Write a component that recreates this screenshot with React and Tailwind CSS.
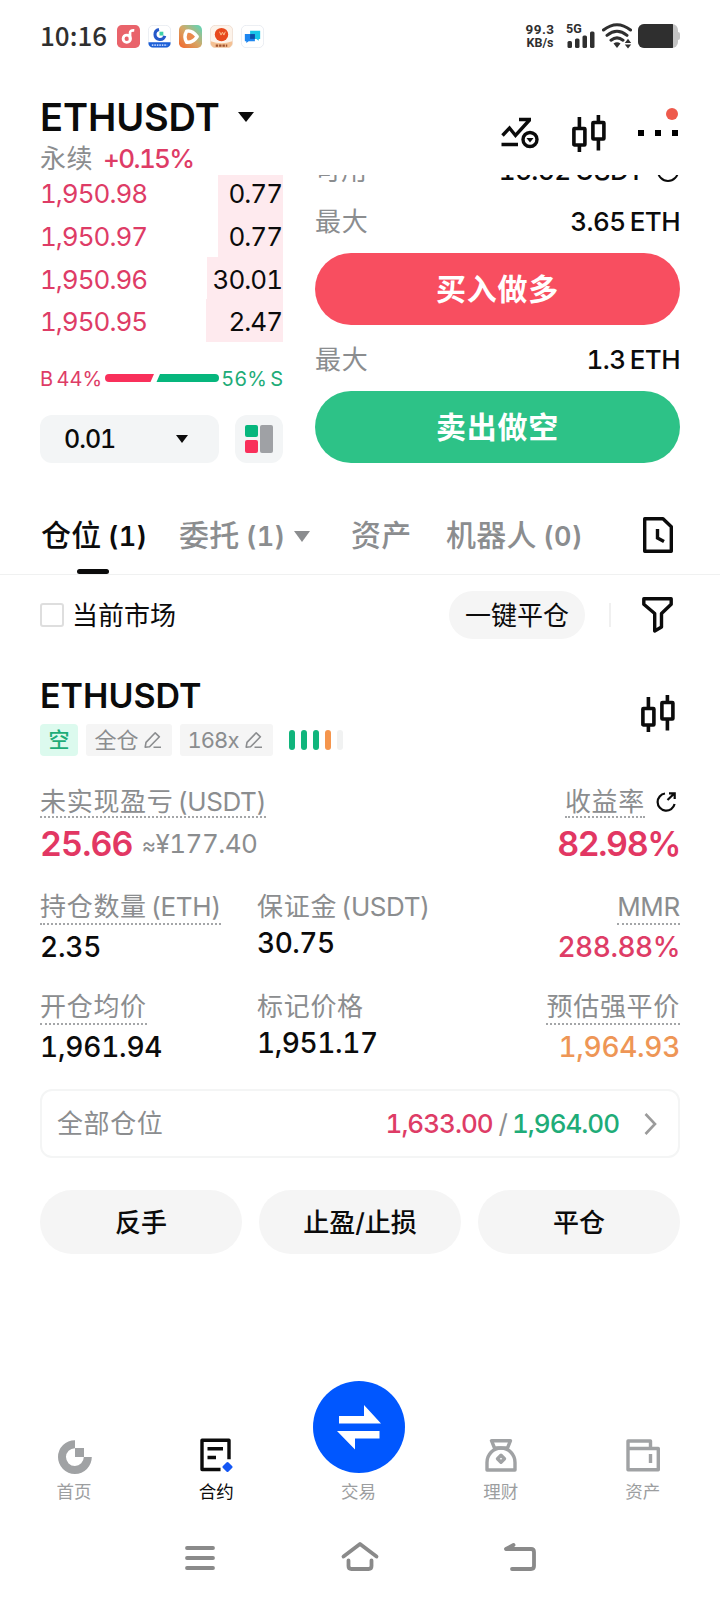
const asks = [
  { price: '1,950.98', size: '0.77', depth: 65 },
  { price: '1,950.97', size: '0.77', depth: 65 },
  { price: '1,950.96', size: '30.01', depth: 76 },
  { price: '1,950.95', size: '2.47', depth: 77 },
];

const riskBars = ['bg-[#11b57c]', 'bg-[#11b57c]', 'bg-[#11b57c]', 'bg-[#f5954d]', 'bg-[#f1f2f2]'];

const CaretDown = ({ className }) => (
  <svg viewBox="0 0 16 10" preserveAspectRatio="none" className={className} fill="currentColor">
    <path d="M0 0h16L8 10z" />
  </svg>
);

const Candles = ({ className }) => (
  <svg viewBox="0 0 34 38" className={className} fill="none" stroke="#0b0b0b" strokeWidth="3.6">
    <rect x="1.9" y="13.5" width="11" height="16.5" rx="0.6" />
    <rect x="20.9" y="7.5" width="11" height="16.5" rx="0.6" />
    <path d="M7.4 2v11.5M7.4 30v7M26.4 0v7.5M26.4 24v11.5" />
  </svg>
);

const Pencil = () => (
  <svg viewBox="0 0 18 18" className="h-[18px] w-[18px]" fill="none" stroke="#8b8d8f" strokeWidth="1.6">
    <path d="M1.2 16.2 2 11.4 11.2 1.8 15.4 5.8 5.6 15.8z M9.5 16.2H17" strokeLinejoin="round" />
  </svg>
);

const StatusBar = () => (
  <div className="flex h-[72px] items-center px-10 text-[#2f2f2f]">
    <span className="w-[77px] pb-[2px] font-['Noto_Sans_CJK_SC',sans-serif] text-[26px] font-medium leading-none">10:16</span>
    <div className="flex gap-[8px]">
      <svg viewBox="0 0 24 24" className="h-[23px] w-[23px]">
        <rect width="24" height="24" rx="5" fill="#e9636b" />
        <circle cx="10.2" cy="14.3" r="3.8" fill="none" stroke="#fff" strokeWidth="3" />
        <path d="M13.6 15V8.2q0-3 4.4-2.6" fill="none" stroke="#fff" strokeWidth="2.8" />
      </svg>
      <svg viewBox="0 0 24 24" className="h-[23px] w-[23px]">
        <rect x="0.4" y="0.4" width="23.2" height="23.2" rx="5" fill="#fff" stroke="#e4e8ee" strokeWidth="0.8" />
        <path d="M0.5 18h23v1a4.6 4.6 0 0 1-4.6 4.6H5.1A4.6 4.6 0 0 1 .5 19z" fill="#1c5fd6" />
        <path d="M11.5 4.8a5.2 5.2 0 1 0 6 6.5" fill="none" stroke="#2558c9" strokeWidth="3.2" />
        <rect x="12" y="7" width="4" height="4" fill="#3fd0a8" />
        <path d="M4 21h16" stroke="#b9d0ff" strokeWidth="2" strokeDasharray="1.6 1" />
      </svg>
      <svg viewBox="0 0 24 24" className="h-[23px] w-[23px]">
        <defs>
          <linearGradient id="play" x1="0" y1="1" x2="1" y2="0">
            <stop offset="0.1" stopColor="#ee7136" />
            <stop offset="0.5" stopColor="#d6a766" />
            <stop offset="0.9" stopColor="#6dd0ae" />
          </linearGradient>
        </defs>
        <rect width="24" height="24" rx="5" fill="url(#play)" />
        <path d="M8 6.5q5.5-1.5 11 5.5-4 6.500-11 6-3.500-5.500 0-11.500z" fill="#ea8a4e" stroke="#fff" strokeWidth="3.6" strokeLinejoin="round" />
      </svg>
      <svg viewBox="0 0 24 24" className="h-[23px] w-[23px]">
        <rect x="0.4" y="0.4" width="23.2" height="23.2" rx="5" fill="#fdf3ea" stroke="#ecd9cb" strokeWidth="0.8" />
        <path d="M.8 17q11 4 22.4 0v2a4.4 4.4 0 0 1-4.4 4.4H5.2A4.4 4.4 0 0 1 .8 19z" fill="#f4c194" />
        <circle cx="12" cy="10" r="7" fill="#e8491d" />
        <path d="M10 7l1.5 3.5L13 7.5l1.5 3L16 7" fill="none" stroke="#fbc08e" strokeWidth="1" />
        <path d="M6 21.5h12" stroke="#a0522d" strokeWidth="2.4" strokeDasharray="2.5 1" />
      </svg>
      <svg viewBox="0 0 24 24" className="h-[23px] w-[23px]">
        <rect x="0.4" y="0.4" width="23.2" height="23.2" rx="5" fill="#fff" stroke="#e4e8ee" strokeWidth="0.8" />
        <path d="M9.5 6H20v8.5h-1.5v2L16 14.500H9.500z" fill="#19c5e8" />
        <path d="M4 9.5h10.5V17H8l-2.500 1.800V17H4z" fill="#1e86f0" />
        <path d="M9.5 9.5h5v5h-5z" fill="#0c4fa8" />
      </svg>
    </div>
    <div className="ml-auto flex items-center">
      <div className="mr-[10px] flex w-[32px] flex-col items-center font-['Roboto',sans-serif] text-[13.5px] font-bold leading-[14px]">
        <span className="tracking-[0.5px]">99.3</span>
        <span className="text-[12.5px]">KB/s</span>
      </div>
      <div className="relative h-[26px] w-[30px]">
        <span className="absolute -top-[1px] left-0 font-['Roboto',sans-serif] text-[12.5px] font-bold leading-[14px]">5G</span>
        <svg viewBox="0 0 30 26" className="h-[26px] w-[30px]" fill="#2f2f2f">
          <rect x="1.5" y="18" width="4.5" height="7" rx="1.5" />
          <rect x="9" y="15.5" width="4.5" height="9.5" rx="1.5" />
          <rect x="16.5" y="12.5" width="4.5" height="12.5" rx="1.5" />
          <rect x="24" y="8.5" width="4.5" height="16.5" rx="1.5" />
        </svg>
      </div>
      <svg viewBox="0 0 30 26" className="ml-[6px] h-[26px] w-[30px]" fill="none" stroke="#2f2f2f" strokeWidth="3">
        <path d="M1.5 7Q15-3.5 28.5 7M5 12.3q10-8 20 0M9 17.2q6-4.6 12 0" strokeLinecap="round" />
        <path d="M11.5 20.5q3.5-2.4 7 0L15 25z" fill="#2f2f2f" stroke="none" />
        <path d="M22.8 20 26 15.8 29.2 20zM22.8 21.5h6.4L26 25.5z" fill="#2f2f2f" stroke="none" />
      </svg>
      <div className="ml-[6px] flex h-6 w-[40px] overflow-hidden rounded-[6px] bg-[#c4c4c4]">
        <div className="w-[35px] bg-[#2f2f2f]" />
      </div>
      <div className="h-2 w-[2px] rounded-r-sm bg-[#c4c4c4]" />
    </div>
  </div>
);

const Header = () => (
  <div className="flex h-[103px] justify-between px-10">
    <div className="pt-[25px]">
      <div className="flex h-10 items-center">
        <h1 className="w-[198px] whitespace-nowrap text-[38px] font-semibold leading-none tracking-[-0.1px]">ETHUSDT</h1>
        <CaretDown className="h-[10px] w-[16px]" />
      </div>
      <div className="mt-[6px] flex h-[31px] items-center text-[26px]">
        <span className="w-[63px] tracking-[0.5px] text-[#8b8d8f]">永续</span>
        <span className="font-medium tracking-[-1.6px] text-[#de3c66]">+0.15%</span>
      </div>
    </div>
    <div className="flex items-start pt-[43px]">
      <svg viewBox="0 0 38 32" className="mt-[2px] h-8 w-[38px]" fill="none" stroke="#0b0b0b" strokeWidth="3.4">
        <path d="M1.5 18.5 8.5 11l6 7.5L28.500 3M18 2.500h12M.5 27.500H17" />
        <circle cx="29" cy="22.5" r="7" />
        <path d="M25.5 21h7L29 25.500z" fill="#0b0b0b" stroke="none" />
      </svg>
      <Candles className="ml-[33px] h-[38px] w-[34px]" />
      <div className="relative ml-[31px] mr-px mt-[15px] flex w-[42px] justify-between px-[1px]">
        <span className="h-[6px] w-[6px] bg-black" />
        <span className="h-[6px] w-[6px] bg-black" />
        <span className="h-[6px] w-[6px] bg-black" />
        <span className="absolute -top-[22px] right-[1px] h-3 w-3 rounded-full bg-[#ee5a4c]" />
      </div>
    </div>
  </div>
);

const OrderBook = () => (
  <div className="w-[243px]">
    <div className="-mt-[3.4px]">
      {asks.map((row) => (
        <div key={row.price} className="relative flex h-[42.6px] items-center justify-between pt-[2px] text-[26px] tracking-[-1px]">
          <div className="absolute inset-y-0 right-0 bg-[#feeaee]" style={{ width: row.depth }} />
          <span className="text-[#de3c66]">{row.price}</span>
          <span className="relative pr-px">{row.size}</span>
        </div>
      ))}
    </div>
    <div className="flex h-[73px] items-center justify-between text-[20px]">
      <span className="pt-[2px] text-[#de3c66]">B 44%</span>
      <svg viewBox="0 0 114 8" className="h-2 w-[114px]">
        <path d="M4 0h45l-3.500 8H4a4 4 0 0 1 0-8z" fill="#f9305b" />
        <path d="M55 0h55a4 4 0 0 1 0 8H51.500z" fill="#06b67d" />
      </svg>
      <span className="pt-[2px] text-[#1eac78]">56% S</span>
    </div>
    <div className="flex justify-between">
      <div className="flex h-12 w-[179px] items-center justify-between rounded-xl bg-[#f3f5f6] pl-6 pr-[31px] text-[25px] font-medium tracking-[-1px]">
        <span className="pt-[2px]">0.01</span>
        <CaretDown className="h-2 w-[12px]" />
      </div>
      <div className="flex h-12 w-12 items-center justify-center gap-[2px] rounded-xl bg-[#f3f5f6]">
        <div className="flex flex-col gap-[3px]">
          <span className="h-[12.5px] w-[13px] rounded-[2px] bg-[#06b67d]" />
          <span className="h-[12.5px] w-[13px] rounded-[2px] bg-[#f9305b]" />
        </div>
        <span className="h-7 w-[13px] rounded-[2px] bg-[#9fa1a5]" />
      </div>
    </div>
  </div>
);

const OrderForm = () => (
  <div className="w-[365px] text-[26px]">
    <div className="-mt-[20px] flex h-[31px] items-center justify-between">
      <span className="text-[#8b8d8f]">可用</span>
      <span className="flex items-center gap-3 font-medium tracking-[-0.5px]">
        16.62 USDT
        <svg viewBox="0 0 24 24" className="h-6 w-6" fill="none" stroke="#0b0b0b" strokeWidth="2">
          <circle cx="12" cy="12" r="10" />
          <path d="M8 10h8M12 6v8" />
        </svg>
      </span>
    </div>
    <div className="flex h-[67px] items-center justify-between pt-[3px]">
      <span className="tracking-[0.8px] text-[#8b8d8f]">最大</span>
      <span className="font-medium tracking-[-0.6px]">3.65 ETH</span>
    </div>
    <button className="block h-[72px] w-full rounded-full bg-[#f84e60] text-[30px] font-bold tracking-[0.8px] text-white">买入做多</button>
    <div className="flex h-[66px] items-center justify-between pt-[2px]">
      <span className="tracking-[0.8px] text-[#8b8d8f]">最大</span>
      <span className="font-medium tracking-[-0.6px]">1.3 ETH</span>
    </div>
    <button className="block h-[72px] w-full rounded-full bg-[#2dc287] text-[30px] font-bold tracking-[0.8px] text-white">卖出做空</button>
  </div>
);

const Tabs = () => (
  <div className="mt-[36px] flex h-[76px] items-start border-b border-[#f0f1f1] pl-[41px] pr-[47px] text-[30px] font-medium leading-[72px] tracking-[0.3px] text-[#8b8d8f]">
    <div className="relative w-[138px] whitespace-nowrap text-[#0b0b0b]">
      仓位 <span className="text-[27px] font-semibold">(1)</span>
      <div className="absolute left-[36px] top-[70px] h-[5px] w-8 rounded-[3px] bg-[#0b0b0b]" />
    </div>
    <div className="flex w-[172px] items-center whitespace-nowrap">
      <span className="w-[115px]">委托 <span className="text-[27px] font-semibold">(1)</span></span>
      <CaretDown className="h-[11px] w-[16px]" />
    </div>
    <div className="w-[95px]">资产</div>
    <div className="whitespace-nowrap">机器人 <span className="text-[27px] font-semibold">(0)</span></div>
    <svg viewBox="0 0 30 36" className="ml-auto mt-[18px] h-9 w-[30px]" fill="none" stroke="#0b0b0b" strokeWidth="3.4">
      <path d="M1.7 1.7h18.300l8.300 8v24.500h-26.600z" strokeLinejoin="round" />
      <path d="M14.5 12v9l6.500 3.500" />
    </svg>
  </div>
);

const FilterRow = () => (
  <div className="flex h-20 items-center pl-10 pr-[47px] text-[26px]">
    <span className="mr-[8px] h-6 w-6 rounded-[3px] border-2 border-[#dedede]" />
    <span>当前市场</span>
    <button className="ml-auto h-12 w-[136px] rounded-full bg-[#f5f5f5]">一键平仓</button>
    <span className="ml-6 h-6 w-[2px] bg-[#f0f0f0]" />
    <svg viewBox="0 0 31 36" className="ml-[31px] h-9 w-[31px]" fill="none" stroke="#0b0b0b" strokeWidth="3.4" strokeLinejoin="round">
      <path d="M1.8 1.8h27.4v5.4L19.5 16.5v13.5l-6.8 4V16.500L1.800 7.200z" />
    </svg>
  </div>
);

const Label = ({ text, unit }) => (
  <>
    <span className={unit || text !== 'MMR' ? 'tracking-[0.7px]' : 'tracking-[-0.3px]'}>{text}</span>
    {unit && <span className="ml-[4px] tracking-[-0.4px]">({unit})</span>}
  </>
);

const Metric = ({ label, unit, value, dotted, right, valueClass = '' }) => (
  <div className={`flex flex-col ${right ? 'items-end' : 'items-start'}`}>
    <div className={`flex h-[35px] items-center whitespace-nowrap text-[26px] text-[#8b8d8f] ${dotted ? 'border-b-2 border-dotted border-[#a4a6a8]' : 'pb-[2px]'}`}>
      <Label text={label} unit={unit} />
    </div>
    <div className={`flex h-[30px] items-center text-[28px] font-medium ${dotted ? 'mt-[7px]' : 'mt-[3px]'} ${valueClass}`}>{value}</div>
  </div>
);

const Position = () => (
  <div className="px-10 pt-5">
    <div className="flex justify-between">
      <div>
        <h2 className="flex h-10 items-center text-[34px] font-semibold">ETHUSDT</h2>
        <div className="mt-[9px] flex h-8 text-[22px] text-[#8b8d8f]">
          <span className="flex w-[38px] items-center justify-center rounded-[4px] bg-[#dcfaee] text-[21px] font-medium text-[#1eac78]">空</span>
          <span className="ml-2 flex w-[86px] items-center justify-center gap-[5px] rounded-[3px] bg-[#f5f5f5] pr-[2px]">全仓<Pencil /></span>
          <span className="ml-2 flex w-[93px] items-center justify-center gap-[6px] rounded-[3px] bg-[#f5f5f5] pr-[3px] tracking-[-0.9px]">168x<Pencil /></span>
          <span className="ml-4 flex items-center gap-[6px]">
            {riskBars.map((color, i) => (
              <i key={i} className={`h-[20px] w-[6px] rounded-full ${color}`} />
            ))}
          </span>
        </div>
      </div>
      <Candles className="mr-[5px] mt-[20px] h-[38px] w-[34px]" />
    </div>

    <div className="mt-[30px] flex justify-between">
      <div>
        <div className="flex h-8 w-fit items-center border-b-2 border-dotted border-[#a4a6a8] text-[26px] text-[#8b8d8f]">
          <Label text="未实现盈亏" unit="USDT" />
        </div>
        <div className="mt-2 flex h-[34px] items-center">
          <span className="text-[34px] font-semibold tracking-[-0.9px] text-[#e23763]">25.66</span>
          <span className="ml-[9px] text-[26px] tracking-[-0.5px] text-[#8b8d8f]"><span className="text-[22px]">≈</span>¥177.40</span>
        </div>
      </div>
      <div className="flex flex-col items-end">
        <div className="flex items-center">
          <span className="flex h-8 items-center border-b-2 border-dotted border-[#a4a6a8] text-[26px] text-[#8b8d8f]">
            <Label text="收益率" />
          </span>
          <svg viewBox="0 0 20 20" className="ml-[11px] mr-[4px] h-5 w-5" fill="none" stroke="#0b0b0b" strokeWidth="2.2">
            <path d="M9 1.5A8.6 8.6 0 1 0 18.6 12M11.5 8 18 1.8M13 1.3H18.7V7" />
          </svg>
        </div>
        <div className="mt-2 flex h-[34px] items-center text-[34px] font-semibold tracking-[-1.4px] text-[#e23763]">82.98%</div>
      </div>
    </div>

    <div className="mt-[30px] grid grid-cols-[217px_1fr_auto] gap-y-7">
      <Metric dotted label="持仓数量" unit="ETH" value="2.35" valueClass="tracking-[-0.2px]" />
      <Metric label="保证金" unit="USDT" value="30.75" valueClass="tracking-[-0.5px]" />
      <Metric dotted right label="MMR" value="288.88%" valueClass="tracking-[-0.5px] text-[#de3c66]" />
      <Metric dotted label="开仓均价" value="1,961.94" valueClass="tracking-[-0.2px]" />
      <Metric label="标记价格" value="1,951.17" valueClass="tracking-[-0.4px]" />
      <Metric dotted right label="预估强平价" value="1,964.93" valueClass="tracking-[-0.3px] text-[#ee9656]" />
    </div>

    <div className="mt-[27px] flex h-[69px] items-center rounded-xl border-2 border-[#f4f5f5] pl-[15px] pr-[21px] text-[26px]">
      <span className="tracking-[0.6px] text-[#8b8d8f]">全部仓位</span>
      <span className="ml-auto font-medium tracking-[-1px] text-[#de3c66]">1,633.00</span>
      <span className="ml-[6px] mr-[4px] text-[#8b8d8f]">/</span>
      <span className="font-medium tracking-[-1px] text-[#1eac78]">1,964.00</span>
      <svg viewBox="0 0 13 22" className="ml-[25px] h-[22px] w-[13px]" fill="none" stroke="#9b9b9b" strokeWidth="2.6">
        <path d="M1.5 1 11 11 1.500 21" />
      </svg>
    </div>

    <div className="mt-8 flex gap-[17px] text-[26px] font-medium">
      <button className="h-16 flex-1 rounded-full bg-[#f5f5f5]">反手</button>
      <button className="h-16 flex-1 rounded-full bg-[#f5f5f5]">止盈/止损</button>
      <button className="h-16 flex-1 rounded-full bg-[#f5f5f5]">平仓</button>
    </div>
  </div>
);

const NavItem = ({ label, active, children }) => (
  <div className={`flex w-[142.2px] flex-col items-center ${active ? 'text-[#0b0b0b]' : 'text-[#9c9ea0]'}`}>
    {children}
    <span className="mt-[8px] text-[17.5px] leading-6">{label}</span>
  </div>
);

const BottomNav = () => (
  <div className="mt-[126px] flex h-[124px] items-end pl-[3px]">
    <NavItem label="首页">
      <svg viewBox="0 0 34 34" className="-mb-[2px] ml-[2px] h-[34px] w-[34px]">
        <path d="M17 4.2A12.9 12.9 0 1 0 29.8 17" fill="none" stroke="#a0a2a4" strokeWidth="8" />
        <rect x="17" y="8" width="9" height="9" fill="#a0a2a4" />
      </svg>
    </NavItem>
    <NavItem label="合约" active>
      <svg viewBox="0 0 34 34" className="h-[34px] w-[34px]" fill="none" stroke="#0b0b0b" strokeWidth="3.4">
        <path d="M21.5 31.5H3V2.2h27v19M8.500 10.800H24M8.500 19.500H17" strokeLinejoin="round" />
        <path d="M28.5 25.5 32 29l-3.500 3.500L25 29z" fill="#1457f5" stroke="#1457f5" strokeWidth="3" strokeLinejoin="round" />
      </svg>
    </NavItem>
    <NavItem label="交易">
      <div className="-mb-[1px] ml-[2px] flex h-[92px] w-[92px] items-center justify-center rounded-full bg-[#0057ff]">
        <svg viewBox="0 0 46 46" className="h-[46px] w-[46px]" fill="#fff">
          <path d="M3 12h25V1L45 19.500H3zM43.500 34.500H19v11L1 27h42.500z" />
        </svg>
      </div>
    </NavItem>
    <NavItem label="理财">
      <svg viewBox="0 0 34 34" className="h-[34px] w-[34px]" fill="none" stroke="#a0a2a4" strokeWidth="3.4" strokeLinejoin="round">
        <path d="M7.5 2.7h19L23.500 10h-13z" />
        <path d="M3 32V24.5a14 14.5 0 0 1 28 0V32z" />
        <path d="M17 17.3 20.5 20.8 17 24.3 13.500 20.800z" />
      </svg>
    </NavItem>
    <NavItem label="资产">
      <svg viewBox="0 0 34 34" className="h-[34px] w-[34px]" fill="none" stroke="#a0a2a4" strokeWidth="3.4" strokeLinejoin="round">
        <path d="M2 10.5V3h22.500v7.500M2 10.500h30.300v21.200H2zM24.500 16v9" />
      </svg>
    </NavItem>
  </div>
);

const SystemNav = () => (
  <div className="mt-[37px] flex h-8 items-center pl-[185px] text-[#8a8a8a]">
    <svg viewBox="0 0 30 26" className="mt-[2px] h-[26px] w-[30px]" fill="none" stroke="currentColor" strokeWidth="3.8" strokeLinecap="round">
      <path d="M2 3h26M2 13h26M2 23h26" />
    </svg>
    <svg viewBox="0 0 40 32" className="ml-[125px] h-8 w-10" fill="none" stroke="currentColor" strokeWidth="3.8" strokeLinecap="round" strokeLinejoin="round">
      <path d="M3.5 15.5 20 3l16.500 12.500M8.500 19.500V25q0 3 3 3h17q3 0 3-3v-5.500" />
    </svg>
    <svg viewBox="0 0 34 32" className="ml-[123px] h-8 w-[34px]" fill="none" stroke="currentColor" strokeWidth="3.8" strokeLinecap="round" strokeLinejoin="round">
      <path d="M10.5 4 3 8h25q3 0 3 3v14q0 3-3 3H9" />
    </svg>
  </div>
);

const App = () => (
  <div className="h-[1600px] w-[720px] overflow-hidden bg-white font-['Inter','Noto_Sans_CJK_SC',sans-serif] text-[#0b0b0b] tabular-nums [word-spacing:-2px]">
    <StatusBar />
    <Header />
    <div className="flex h-[288px] justify-between overflow-hidden px-10">
      <OrderBook />
      <OrderForm />
    </div>
    <Tabs />
    <FilterRow />
    <Position />
    <BottomNav />
    <SystemNav />
  </div>
);

export default App;
